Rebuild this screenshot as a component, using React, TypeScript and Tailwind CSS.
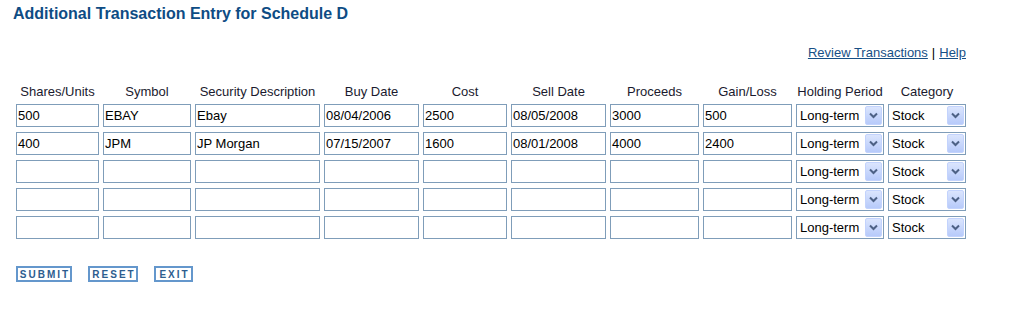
import React from "react";

const cols = [
  { label: "Shares/Units", w: 83 },
  { label: "Symbol", w: 88 },
  { label: "Security Description", w: 125 },
  { label: "Buy Date", w: 95 },
  { label: "Cost", w: 84 },
  { label: "Sell Date", w: 95 },
  { label: "Proceeds", w: 89 },
  { label: "Gain/Loss", w: 89 },
];

const rows: string[][] = [
  ["500", "EBAY", "Ebay", "08/04/2006", "2500", "08/05/2008", "3000", "500"],
  ["400", "JPM", "JP Morgan", "07/15/2007", "1600", "08/01/2008", "4000", "2400"],
  ["", "", "", "", "", "", "", ""],
  ["", "", "", "", "", "", "", ""],
  ["", "", "", "", "", "", "", ""],
];

function Select({ value, w }: { value: string; w: number }) {
  return (
    <div
      className="h-[23px] shrink-0 border border-[#7f9db9] bg-white flex items-center justify-between pl-[3px] pr-[1px] text-[13px] text-black"
      style={{ width: w }}
    >
      <span>{value}</span>
      <div className="w-[17px] h-[19px] rounded-[2px] border border-[#c3d3fd] bg-gradient-to-b from-[#dbe5fd] to-[#b7cafa] flex items-center justify-center">
        <svg width="9" height="7" viewBox="0 0 9 7">
          <path d="M1 1.5 L4.5 5 L8 1.5" stroke="#4d6185" strokeWidth="2" fill="none" />
        </svg>
      </div>
    </div>
  );
}

export default function App() {
  return (
    <div className="w-[1010px] h-[320px] bg-white" style={{ fontFamily: '"Liberation Sans", Arial, sans-serif' }}>
      <div className="pl-[13px] pt-[4px] text-[16px] font-bold text-[#0e4c84] leading-[20px]">
        Additional Transaction Entry for Schedule D
      </div>
      <div className="flex justify-end pr-[44px] mt-[21px] text-[13px] leading-[16px] text-black">
        <a className="underline text-[#174f86]">Review Transactions</a>
        <span className="mx-[4px]">|</span>
        <a className="underline text-[#174f86]">Help</a>
      </div>
      <div className="pl-[16px] mt-[23px]">
        <div className="flex gap-[4px] text-[13px] text-[#1a1a2e] leading-[16px] h-[20px]">
          {cols.map((c) => (
            <div key={c.label} className="text-center shrink-0 whitespace-nowrap" style={{ width: c.w }}>
              {c.label}
            </div>
          ))}
          <div className="text-center shrink-0 whitespace-nowrap w-[88px]">Holding Period</div>
          <div className="text-center shrink-0 whitespace-nowrap w-[78px]">Category</div>
        </div>
        <div className="flex flex-col gap-[5px]">
          {rows.map((r, i) => (
            <div key={i} className="flex gap-[4px]">
              {r.map((v, j) => (
                <div
                  key={j}
                  className="h-[23px] shrink-0 border border-[#7f9db9] bg-white text-[13px] text-black flex items-center pl-[1px]"
                  style={{ width: cols[j].w }}
                >
                  {v}
                </div>
              ))}
              <Select value="Long-term" w={88} />
              <Select value="Stock" w={78} />
            </div>
          ))}
        </div>
        <div className="flex mt-[27px] gap-[16px]">
          {["SUBMIT", "RESET", "EXIT"].map((b, i) => (
            <div
              key={b}
              className="h-[16px] border-2 border-[#6497cc] flex items-center justify-center text-[10px] font-bold text-[#2d5d8f] tracking-[2px] pl-[2px]"
              style={{ width: [56, 50, 39][i] }}
            >
              {b}
            </div>
          ))}
        </div>
      </div>
    </div>
  );
}
